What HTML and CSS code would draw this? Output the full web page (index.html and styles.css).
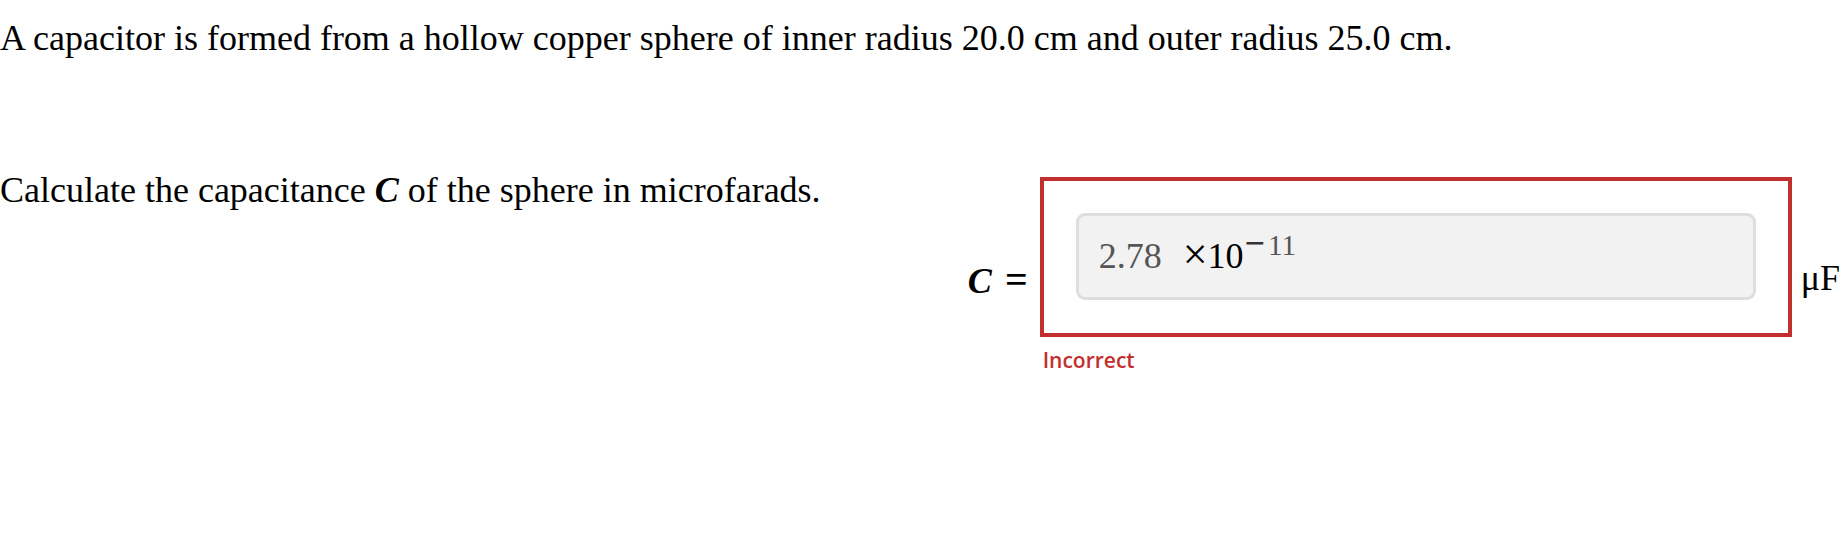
FILE: index.html
```html
<!DOCTYPE html>
<html lang="en">
<head>
<meta charset="utf-8">
<title>Capacitor question</title>
<link rel="stylesheet" href="styles.css">
</head>
<body>
<main class="page">
  <p class="question">A capacitor is formed from a hollow copper sphere of inner radius 20.0 cm and outer radius 25.0 cm.</p>
  <section class="part">
    <p class="prompt">Calculate the capacitance <b class="var">C</b> of the sphere in microfarads.</p>
    <div class="answer">
      <div class="label"><b class="var">C</b><span class="eq">=</span></div>
      <div class="field">
        <div class="box">
          <div class="input">
            <span class="value">2.78</span><span class="times"><span class="mult">×</span>10</span><span class="exp"><span class="minus">−</span><span class="expval">11</span></span>
          </div>
        </div>
        <div class="status">Incorrect</div>
      </div>
      <div class="unit">μF</div>
    </div>
  </section>
</main>
</body>
</html>
```

FILE: styles.css
```css
html, body {
  margin: 0;
  padding: 0;
  background: #ffffff;
}

.page {
  font-family: "Liberation Serif", "Times New Roman", serif;
  font-size: 36px;
  line-height: 40px;
  color: #000000;
  padding: 18px 4px 0 0;
}

.question {
  margin: 0;
}

.part {
  display: flex;
  align-items: flex-start;
  margin-top: 112px;
}

.prompt {
  margin: 0;
  flex: 1;
}

.var {
  font-weight: bold;
  font-style: italic;
}

.answer {
  display: flex;
  align-items: flex-start;
  margin-top: 7px;
}

.label {
  display: flex;
  align-items: baseline;
  padding-top: 83px;
  margin-right: 12px;
}

.eq {
  margin-left: 13px;
  font-weight: bold;
  font-size: 40px;
}

.field {
  display: flex;
  flex-direction: column;
}

.box {
  width: 752px;
  height: 160px;
  box-sizing: border-box;
  border: 4px solid #c1302e;
  padding: 32px;
}

.input {
  height: 87px;
  box-sizing: border-box;
  border: 3px solid #dedede;
  border-radius: 9px;
  background: #f2f2f2;
  padding: 20px 0 0 20px;
  white-space: nowrap;
}

.value {
  color: #555555;
}

.times {
  margin-left: 21px;
}

.mult {
  font-size: 44px;
  line-height: 0;
  vertical-align: -1px;
}

.exp {
  vertical-align: 13px;
  line-height: 0;
}

.minus {
  font-weight: bold;
  color: #333333;
  margin-left: 1px;
}

.expval {
  font-size: 29px;
  margin-left: 3px;
  color: #555555;
}

.status {
  font-family: "Open Sans", sans-serif;
  font-weight: 600;
  font-size: 21px;
  line-height: 28px;
  color: #c1302e;
  margin-top: 9px;
  padding-left: 3px;
}

.unit {
  padding-top: 81px;
  margin-left: 9px;
}
```
